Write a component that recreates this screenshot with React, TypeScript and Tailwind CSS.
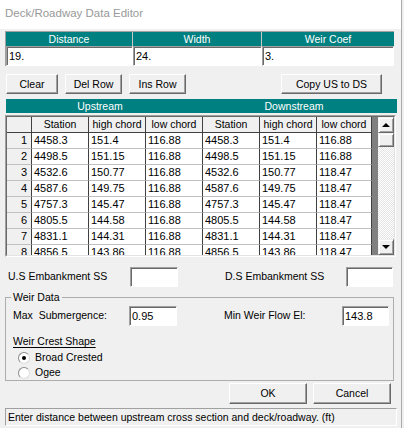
import React from 'react'

type Row = [string, string, string, string, string, string]

const rows: Row[] = [
  ['4458.3', '151.4', '116.88', '4458.3', '151.4', '116.88'],
  ['4498.5', '151.15', '116.88', '4498.5', '151.15', '116.88'],
  ['4532.6', '150.77', '116.88', '4532.6', '150.77', '118.47'],
  ['4587.6', '149.75', '116.88', '4587.6', '149.75', '118.47'],
  ['4757.3', '145.47', '116.88', '4757.3', '145.47', '118.47'],
  ['4805.5', '144.58', '116.88', '4805.5', '144.58', '118.47'],
  ['4831.1', '144.31', '116.88', '4831.1', '144.31', '118.47'],
  ['4856.5', '143.86', '116.88', '4856.5', '143.86', '118.47'],
]

const headers = ['Station', 'high chord', 'low chord', 'Station', 'high chord', 'low chord']

function Button({ label, className }: { label: string; className: string }) {
  return (
    <div
      className={`flex shrink-0 items-center justify-center bg-[#f0f0f0] border border-t-white border-l-white border-r-[#696969] border-b-[#696969] shadow-[inset_-1px_-1px_0_#a0a0a0] leading-none text-black ${className}`}
    >
      {label}
    </div>
  )
}

function Field({ value, className }: { value?: string; className: string }) {
  return (
    <div className={`flex shrink-0 border border-t-[#a0a0a0] border-l-[#a0a0a0] border-r-white border-b-white ${className}`}>
      <div className="flex flex-1 items-center bg-white border-t border-l border-[#696969] pl-[1px] text-[11px] leading-none">
        {value}
      </div>
    </div>
  )
}

function RaisedBox({ className, children }: { className: string; children?: React.ReactNode }) {
  return (
    <div className={`flex shrink-0 items-center justify-center bg-[#f0f0f0] border border-t-[#f0f0f0] border-l-[#f0f0f0] border-r-[#696969] border-b-[#696969] shadow-[inset_1px_1px_0_#fff,inset_-1px_-1px_0_#a0a0a0] ${className}`}>
      {children}
    </div>
  )
}

function Radio({ label, checked }: { label: string; checked?: boolean }) {
  return (
    <div className="flex h-[15px] items-center gap-[5px] pl-[12px]">
      <div className="flex h-[12px] w-[12px] items-center justify-center rounded-full border border-t-[#8a8a8a] border-l-[#8a8a8a] border-r-[#dcdcdc] border-b-[#dcdcdc] bg-white">
        {checked && <div className="h-[4px] w-[4px] rounded-full bg-black" />}
      </div>
      <span>{label}</span>
    </div>
  )
}

export default function App() {
  return (
    <div className="h-[428px] w-[404px] overflow-hidden bg-[#f0f0f0] font-['Liberation_Sans',Arial,sans-serif] text-[10.5px] text-black">
      <div className="flex h-full w-[402px] flex-col border-r border-[#ababab]">
        {/* title bar */}
        <div className="h-[29px] shrink-0 bg-white pl-[5px] pt-[6px] text-[11.5px] leading-[14px] text-[#999999]">
          Deck/Roadway Data Editor
        </div>

        <div className="flex flex-col pl-[5px]">
          {/* distance / width / weir coef */}
          <div className="mt-[2px] flex w-[389px] flex-col border-t border-l border-[#a0a0a0]">
            <div className="flex h-[14px] bg-[#008080] leading-[14px] text-white">
              <div className="w-[127px] border-r border-[#c8c8c8] text-center">Distance</div>
              <div className="w-[129px] border-r border-[#c8c8c8] text-center">Width</div>
              <div className="w-[132px] text-center">Weir Coef</div>
            </div>
            <div className="flex h-[20px]">
              <Field value="19." className="w-[127px]" />
              <Field value="24." className="w-[129px]" />
              <Field value="3." className="w-[132px]" />
            </div>
          </div>

          {/* buttons */}
          <div className="mt-[8px] flex h-[20px] pl-[1px]">
            <Button label="Clear" className="w-[52px]" />
            <Button label="Del Row" className="ml-[7px] w-[57px]" />
            <Button label="Ins Row" className="ml-[7px] w-[57px]" />
            <Button label="Copy US to DS" className="ml-[95px] w-[101px]" />
          </div>

          {/* upstream / downstream header */}
          <div className="ml-[1px] mt-[5px] flex h-[14px] w-[391px] bg-[#008080] leading-[14px] text-white">
            <div className="w-[188px] text-center">Upstream</div>
            <div className="w-[200px] text-center">Downstream</div>
          </div>

          {/* grid */}
          <div className="mt-[2px] w-[391px] border border-t-[#a0a0a0] border-l-[#a0a0a0] border-r-white border-b-white">
            <div className="flex h-[140px] border border-t-[#696969] border-l-[#696969] border-r-[#e3e3e3] border-b-[#e3e3e3] bg-[#808080]">
              <div className="flex w-[365px] flex-col overflow-hidden">
                <div className="flex h-[16px] shrink-0">
                  <div className="w-[25px] shrink-0 border-r border-b border-[#404040] bg-[#f0f0f0]" />
                  {headers.map((h, i) => (
                    <div
                      key={i}
                      className={`${i === 5 ? 'w-[55px]' : 'w-[57px]'} shrink-0 overflow-hidden whitespace-nowrap border-r border-b border-[#404040] bg-[#f0f0f0] text-center leading-[15px]`}
                    >
                      {h}
                    </div>
                  ))}
                </div>
                {rows.map((r, n) => (
                  <div key={n} className="flex h-[16px] shrink-0 text-[11px]">
                    <div className="w-[25px] shrink-0 border-r border-b border-r-[#404040] border-b-[#c0c0c0] bg-[#f0f0f0] pr-[4px] text-right leading-[15px]">
                      {n + 1}
                    </div>
                    {r.map((v, i) => (
                      <div
                        key={i}
                        className={`${i === 5 ? 'w-[55px]' : 'w-[57px]'} shrink-0 overflow-hidden whitespace-nowrap border-r border-b border-r-[#404040] border-b-[#c0c0c0] bg-white pl-[2px] leading-[15px]`}
                      >
                        {v}
                      </div>
                    ))}
                  </div>
                ))}
              </div>
              <div className="w-[6px]" />
              <div className="flex w-[16px] flex-col">
                <RaisedBox className="h-[16px] w-[16px]">
                  <div className="h-0 w-0 border-x-[4px] border-b-[4px] border-x-transparent border-b-black" />
                </RaisedBox>
                <RaisedBox className="h-[14px] w-[16px]" />
                <div className="flex-1 bg-[repeating-conic-gradient(#ffffff_0_25%,#e4e4e4_0_50%)] bg-[length:2px_2px]" />
                <RaisedBox className="h-[16px] w-[16px]">
                  <div className="h-0 w-0 border-x-[4px] border-t-[4px] border-x-transparent border-t-black" />
                </RaisedBox>
              </div>
            </div>
          </div>

          {/* embankment */}
          <div className="mt-[10px] flex h-[20px] items-center">
            <div className="w-[125px] pl-[3px]">U.S Embankment SS</div>
            <Field className="h-[20px] w-[48px]" />
            <div className="ml-[47px] w-[121px]">D.S Embankment SS</div>
            <Field className="h-[20px] w-[47px]" />
          </div>

          {/* weir data */}
          <fieldset className="mt-[3px] w-[389px] border border-[#adadad] px-0 pb-0">
            <legend className="ml-[5px] px-[2px] leading-[14px]">Weir Data</legend>
            <div className="mt-[2px] flex h-[20px] items-center">
              <div className="w-[123px] whitespace-pre pl-[7px]">Max  Submergence:</div>
              <Field value="0.95" className="h-[20px] w-[48px]" />
              <div className="ml-[47px] w-[118px]">Min Weir Flow El:</div>
              <Field value="143.8" className="h-[20px] w-[47px]" />
            </div>
            <div className="mt-[8px] pl-[7px] leading-[14px]">
              <span className="underline underline-offset-[2px]">Weir Crest Shape</span>
            </div>
            <div className="mt-[2px]">
              <Radio label="Broad Crested" checked />
              <Radio label="Ogee" />
            </div>
          </fieldset>

          {/* ok / cancel */}
          <div className="mt-[2px] flex h-[21px]">
            <Button label="OK" className="ml-[224px] w-[78px]" />
            <Button label="Cancel" className="ml-[6px] w-[78px]" />
          </div>

          {/* status bar */}
          <div className="mt-[4px] flex h-[18px] w-[392px] items-center border border-t-[#a0a0a0] border-l-[#a0a0a0] border-r-white border-b-white pl-[2px] leading-none">
            Enter distance between upstream cross section and deck/roadway. (ft)
          </div>
        </div>
      </div>
    </div>
  )
}
